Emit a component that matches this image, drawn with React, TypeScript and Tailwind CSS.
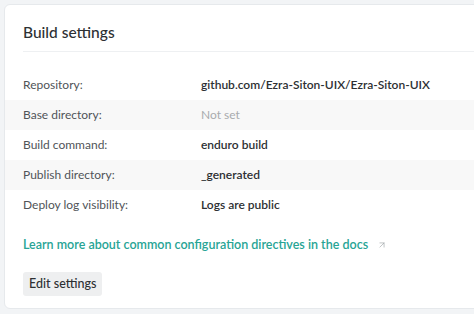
import { ArrowUpRight } from 'lucide-react';

const rows = [
  { label: 'Repository:', value: 'github.com/Ezra-Siton-UIX/Ezra-Siton-UIX' },
  { label: 'Base directory:', value: 'Not set', muted: true },
  { label: 'Build command:', value: 'enduro build' },
  { label: 'Publish directory:', value: '_generated' },
  { label: 'Deploy log visibility:', value: 'Logs are public' },
];

export default function App() {
  return (
    <div
      className="h-[314px] w-[474px] overflow-hidden bg-[#f2f4f6] pl-[4px] pt-[4px]"
      style={{ fontFamily: 'Lato, "Open Sans", sans-serif' }}
    >
      <div className="h-[305px] w-[490px] rounded-tl-[6px] rounded-bl-[6px] border border-[#e6e9ec] bg-white">
        {/* Header */}
        <div className="px-[18px] pt-[17px]">
          <h2 className="pb-[9px] text-[15.5px] font-medium leading-[20px] text-[#2d3033]">Build settings</h2>
          <div className="h-px bg-[#eef0f2]" />
        </div>

        {/* Rows */}
        <div className="mt-[18px]">
          {rows.map((row, i) => (
            <div
              key={row.label}
              className={`flex h-[30px] items-center px-[18px] text-[12px] ${i % 2 === 1 ? 'bg-[#f8f8f8]' : ''}`}
            >
              <span className="w-[178px] text-[#505458]">{row.label}</span>
              <span className={row.muted ? 'text-[#a8abae]' : 'font-semibold text-[#2d3033]'}>{row.value}</span>
            </div>
          ))}
        </div>

        {/* Docs link */}
        <div className="mt-[16px] flex items-center gap-[9px] px-[18px]">
          <span className="text-[12.5px] font-semibold text-[#27a495]">
            Learn more about common configuration directives in the docs
          </span>
          <ArrowUpRight className="h-[10px] w-[10px] text-[#9aa0a4]" strokeWidth={1.5} />
        </div>

        {/* Button */}
        <div className="mt-[15px] px-[18px]">
          <button className="h-[24px] rounded-[3px] bg-[#eeeff0] px-[6px] text-[12.5px] font-medium text-[#2d3033]">
            Edit settings
          </button>
        </div>
      </div>
    </div>
  );
}
